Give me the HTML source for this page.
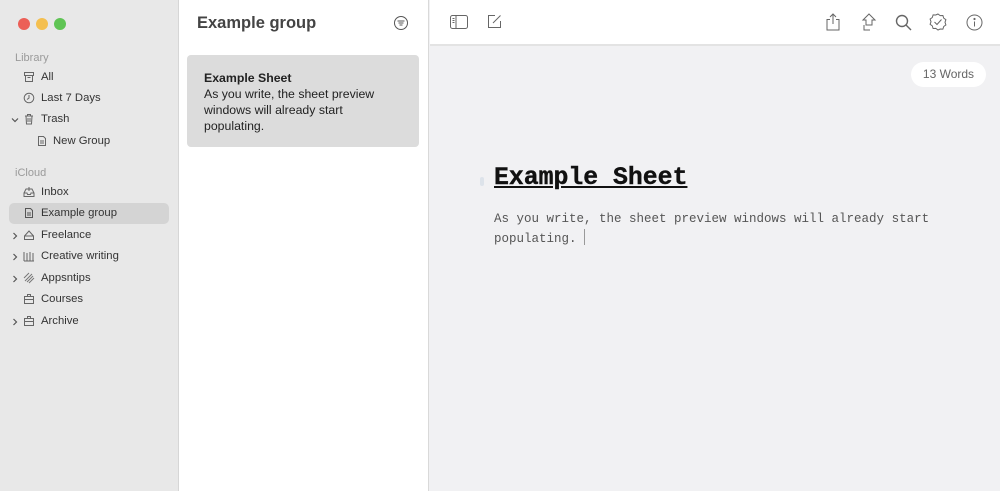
<!DOCTYPE html>
<html><head><meta charset="utf-8"><style>
*{margin:0;padding:0;box-sizing:border-box}
body{width:1000px;height:491px;overflow:hidden;font-family:"Liberation Sans",sans-serif;background:#f1f1f3;position:relative}
.side{position:absolute;left:0;top:0;width:179px;height:491px;background:#e8e8e8;border-right:1px solid #d6d6d6}
.dot{position:absolute;top:18px;width:12px;height:12px;border-radius:50%}
.sec{position:absolute;left:15px;font-size:11px;color:#9a9a9a}
.it{position:absolute;left:0;width:179px;height:21px;font-size:11.3px;color:#333;line-height:21px}
.it .t{position:absolute;left:41px}
.it svg{position:absolute;left:23px;top:4px}
.it svg.cv{left:11px;top:7px}
.list{position:absolute;left:179px;top:0;width:250px;height:491px;background:#fff;border-right:1px solid #d9d9d9}
.main{position:absolute;left:430px;top:0;width:570px;height:491px;background:#f1f1f3}
.tb{position:absolute;left:0;top:0;width:570px;height:46px;background:#fff;border-bottom:2px solid #e3e3e3}
.ic{position:absolute;top:13px}
</style></head><body>
<div class="side">
<div class="dot" style="left:18px;background:#ec5f57"></div>
<div class="dot" style="left:36px;background:#f4bf4f"></div>
<div class="dot" style="left:54px;background:#5fc454"></div>
<div class="sec" style="top:52px">Library</div>
<div class="it" style="top:67px"><svg width="12" height="12" viewBox="0 0 12 12" fill="none" stroke="#666"><rect x="1.5" y="1.5" width="9" height="3"/><path d="M2.5 4.5v6h7v-6M4.5 6.5h3"/></svg><span class="t">All</span></div>
<div class="it" style="top:88px"><svg width="12" height="12" viewBox="0 0 12 12" fill="none" stroke="#666"><circle cx="6" cy="6" r="4.8"/><path d="M6 3v3l-2 1.5"/></svg><span class="t">Last 7 Days</span></div>
<div class="it" style="top:109px"><svg class="cv" width="8" height="8" viewBox="0 0 8 8" fill="none" stroke="#555" stroke-width="1.2"><path d="M1 2.5l3 3 3-3"/></svg><svg width="12" height="12" viewBox="0 0 12 12" fill="none" stroke="#666"><path d="M2 3h8M4.5 3V1.5h3V3M3 3l.5 8h5L9 3M5 5v4M7 5v4"/></svg><span class="t">Trash</span></div>
<div class="it" style="top:131px"><svg style="left:36px" width="12" height="12" viewBox="0 0 12 12" fill="none" stroke="#666"><path d="M2.5 1.5h5l2 2v7h-7z M4 6h4M4 8h4"/></svg><span class="t" style="left:53px">New Group</span></div>
<div class="sec" style="top:167px">iCloud</div>
<div class="it" style="top:182px"><svg width="12" height="12" viewBox="0 0 12 12" fill="none" stroke="#666"><path d="M1 7l2-4h6l2 4v3.5H1z M1 7h3l.5 1.5h3L8 7h3 M6 1v4"/></svg><span class="t">Inbox</span></div>
<div style="position:absolute;left:9px;top:203px;width:160px;height:21px;background:#d4d4d4;border-radius:5px"></div>
<div class="it" style="top:203px"><svg width="12" height="12" viewBox="0 0 12 12" fill="none" stroke="#555"><path d="M2.5 1.5h5l2 2v7h-7z M4 6h4M4 8h4"/></svg><span class="t">Example group</span></div>
<div class="it" style="top:225px"><svg class="cv" width="8" height="8" viewBox="0 0 8 8" fill="none" stroke="#555" stroke-width="1.2"><path d="M2.5 1l3 3-3 3"/></svg><svg width="12" height="12" viewBox="0 0 12 12" fill="none" stroke="#666"><path d="M1.5 7l4.5-5 4.5 5v3.5h-9z M1.5 7h9"/></svg><span class="t">Freelance</span></div>
<div class="it" style="top:246px"><svg class="cv" width="8" height="8" viewBox="0 0 8 8" fill="none" stroke="#555" stroke-width="1.2"><path d="M2.5 1l3 3-3 3"/></svg><svg width="12" height="12" viewBox="0 0 12 12" fill="none" stroke="#666"><path d="M1 2v9M4 3v8M7 2v9M10 3v8M1 11h10"/></svg><span class="t">Creative writing</span></div>
<div class="it" style="top:268px"><svg class="cv" width="8" height="8" viewBox="0 0 8 8" fill="none" stroke="#555" stroke-width="1.2"><path d="M2.5 1l3 3-3 3"/></svg><svg width="12" height="12" viewBox="0 0 12 12" fill="none" stroke="#777"><path d="M1 6l5-5M2 9l7-7M4 10l6-6M6 11l5-5"/></svg><span class="t">Appsntips</span></div>
<div class="it" style="top:289px"><svg width="12" height="12" viewBox="0 0 12 12" fill="none" stroke="#666"><rect x="1.5" y="3.5" width="9" height="7"/><path d="M4.5 3.5v-2h3v2M1.5 6.5h9"/></svg><span class="t">Courses</span></div>
<div class="it" style="top:311px"><svg class="cv" width="8" height="8" viewBox="0 0 8 8" fill="none" stroke="#555" stroke-width="1.2"><path d="M2.5 1l3 3-3 3"/></svg><svg width="12" height="12" viewBox="0 0 12 12" fill="none" stroke="#666"><rect x="1.5" y="3.5" width="9" height="7"/><path d="M4.5 3.5v-2h3v2M1.5 6.5h9"/></svg><span class="t">Archive</span></div>
</div>
<div class="list">
<div style="position:absolute;left:18px;top:14px;font-size:16.5px;font-weight:bold;color:#444">Example group</div>
<svg style="position:absolute;left:214px;top:15px" width="16" height="16" viewBox="0 0 16 16" fill="none" stroke="#555"><circle cx="8" cy="8" r="6.5"/><path d="M4.5 6h7M5.5 8h5M6.5 10h3"/></svg>
<div style="position:absolute;left:8px;top:55px;width:232px;height:92px;background:#dcdcdc;border-radius:4px;padding:15px 33px 15px 17px;font-size:12.3px;line-height:16px;color:#222"><b>Example Sheet</b><br>As you write, the sheet preview windows will already start populating.</div>
</div>
<div class="main">
<div class="tb">
<svg class="ic" style="left:20px;top:15px" width="18" height="14" viewBox="0 0 18 14" fill="none" stroke="#666"><rect x="0.5" y="0.5" width="17" height="13" rx="2"/><path d="M6 .5v13M2.5 3.5h2M2.5 5.5h2M2.5 7.5h2"/></svg>
<svg class="ic" style="left:57px;top:14px" width="15" height="15" viewBox="0 0 15 15" fill="none" stroke="#666"><path d="M8 1.5H1.5v12h12V7"/><path d="M6 9l7.5-7.5"/></svg>
<svg class="ic" style="left:396px;top:13px" width="14" height="18" viewBox="0 0 14 18" fill="none" stroke="#666"><path d="M4 6.5H1v10.5h12V6.5h-3M7 11V1M4 4l3-3 3 3"/></svg>
<svg class="ic" style="left:431px;top:13px" width="16" height="18" viewBox="0 0 16 18" fill="none" stroke="#666"><path d="M8 1l6 6h-3v5H5V7H2z"/><path d="M3 12v5h6"/></svg>
<svg class="ic" style="left:465px;top:14px" width="17" height="17" viewBox="0 0 17 17" fill="none" stroke="#666" stroke-width="1.4"><circle cx="7" cy="7" r="5.5"/><path d="M11 11l5 5"/></svg>
<svg class="ic" style="left:499px;top:13px" width="18" height="18" viewBox="0 0 18 18" fill="none" stroke="#666"><path d="M9 1l2.2 1.6 2.7-.1.8 2.6 2.2 1.6-.9 2.6.9 2.6-2.2 1.6-.8 2.6-2.7-.1L9 17l-2.2-1.6-2.7.1-.8-2.6-2.2-1.6.9-2.6-.9-2.6 2.2-1.6.8-2.6 2.7.1z"/><path d="M5.5 9l2.5 2.5 4.5-5"/></svg>
<svg class="ic" style="left:536px;top:14px" width="17" height="17" viewBox="0 0 17 17" fill="none" stroke="#666"><circle cx="8.5" cy="8.5" r="7.5"/><path d="M8.5 7.5v5"/><circle cx="8.5" cy="5" r=".6" fill="#666"/></svg>
</div>
<div style="position:absolute;left:481px;top:62px;width:75px;height:25px;background:#fff;border-radius:13px;font-size:12px;color:#666;text-align:center;line-height:25px">13 Words</div>
<div style="position:absolute;left:50px;top:177px;width:4px;height:9px;background:#dde3ea;border-radius:2px"></div>
<div style="position:absolute;left:64px;top:164px;font-family:'Liberation Mono',monospace;font-size:24.8px;font-weight:bold;text-decoration:underline;color:#111;-webkit-text-stroke:0.4px #111">Example Sheet</div>
<div style="position:absolute;left:64px;top:209px;width:460px;font-family:'Liberation Mono',monospace;font-size:12.5px;line-height:20px;color:#555">As you write, the sheet preview windows will already start populating. <span style="display:inline-block;width:1px;height:16px;background:#999;vertical-align:-3px"></span></div>
</div>
</body></html>
